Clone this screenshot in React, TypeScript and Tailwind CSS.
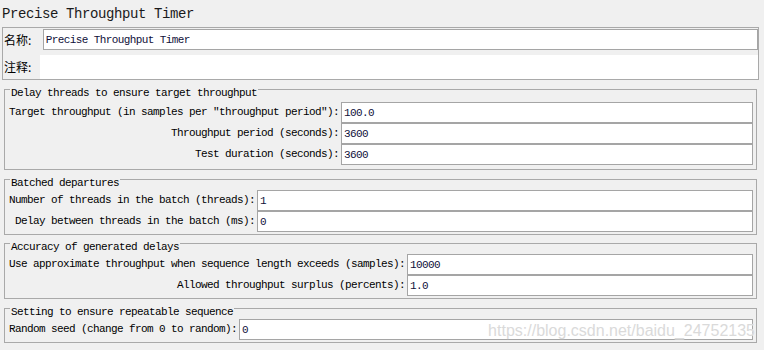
type Field = { label: string; value: string };

type Section = {
  title: string;
  gap: string;
  rowsTop: string;
  bottom: string;
  fields: Field[];
};

const sections: Section[] = [
  {
    title: "Delay threads to ensure target throughput",
    gap: "mt-[9px]",
    rowsTop: "mt-[3px]",
    bottom: "pb-[4px]",
    fields: [
      { label: 'Target throughput (in samples per "throughput period"):', value: "100.0" },
      { label: "Throughput period (seconds):", value: "3600" },
      { label: "Test duration (seconds):", value: "3600" },
    ],
  },
  {
    title: "Batched departures",
    gap: "mt-[9px]",
    rowsTop: "mt-[1px]",
    bottom: "pb-[2px]",
    fields: [
      { label: "Number of threads in the batch (threads):", value: "1" },
      { label: "Delay between threads in the batch (ms):", value: "0" },
    ],
  },
  {
    title: "Accuracy of generated delays",
    gap: "mt-[8px]",
    rowsTop: "mt-[1px]",
    bottom: "pb-[2px]",
    fields: [
      { label: "Use approximate throughput when sequence length exceeds (samples):", value: "10000" },
      { label: "Allowed throughput surplus (percents):", value: "1.0" },
    ],
  },
  {
    title: "Setting to ensure repeatable sequence",
    gap: "mt-[9px]",
    rowsTop: "mt-[1px]",
    bottom: "pb-[2px]",
    fields: [{ label: "Random seed (change from 0 to random):", value: "0" }],
  },
];

const TextBox = ({ value }: { value: string }) => (
  <input
    readOnly
    value={value}
    className="h-[21px] w-full border border-[#a5a5a5] bg-white px-[2px] font-['Liberation_Mono',monospace] text-[11px] tracking-[-0.6px] text-[#10103a] outline-none"
  />
);

const Group = ({ section }: { section: Section }) => (
  <div className={`${section.gap} ml-[4px] w-[753px] border border-[#a9a9a9] pr-[3px] ${section.bottom}`}>
    <div className="-mt-[3px] h-[12px] leading-[12px]">
      <span className="ml-[5px] bg-[#f0f0f0] px-[1px]">{section.title}</span>
    </div>
    <div className={`${section.rowsTop} grid grid-cols-[auto_1fr] items-center`}>
      {section.fields.map((f) => (
        <div key={f.label} className="contents">
          <div className="whitespace-pre pl-[4px] pr-[2px] text-right">{f.label}</div>
          <TextBox value={f.value} />
        </div>
      ))}
    </div>
  </div>
);

export default function App() {
  return (
    <div className="relative h-[350px] w-[764px] overflow-hidden bg-[#f0f0f0] font-['Liberation_Mono',monospace] text-[11px] tracking-[-0.6px] text-black">
      <div className="h-[27px] pl-[2px] pt-[1px] text-[14px] leading-[26px] tracking-[-0.4px] text-[#1a1a1a]">
        Precise Throughput Timer
      </div>

      <div className="ml-[2px] w-[757px] border border-[#a9a9a9] pt-[1px]">
        <div className="flex h-[21px] items-center">
          <div className="w-[42px] pl-[1px] font-['Noto_Sans_CJK_SC','Liberation_Mono',monospace] text-[12px] tracking-normal">
            名称:
          </div>
          <TextBox value="Precise Throughput Timer" />
        </div>
        <div className="mt-[5px] flex h-[24px] items-center">
          <div className="w-[37px] pl-[1px] font-['Noto_Sans_CJK_SC','Liberation_Mono',monospace] text-[12px] tracking-normal">
            注释:
          </div>
          <div className="h-full flex-1 bg-white" />
        </div>
      </div>

      {sections.map((s) => (
        <Group key={s.title} section={s} />
      ))}

      <div className="absolute right-[9px] top-[319px] font-['Liberation_Sans',Arial,sans-serif] text-[16px] tracking-normal text-[#dadada] [text-shadow:0_0_1px_#ffffff]">
        https://blog.csdn.net/baidu_24752135
      </div>
    </div>
  );
}
